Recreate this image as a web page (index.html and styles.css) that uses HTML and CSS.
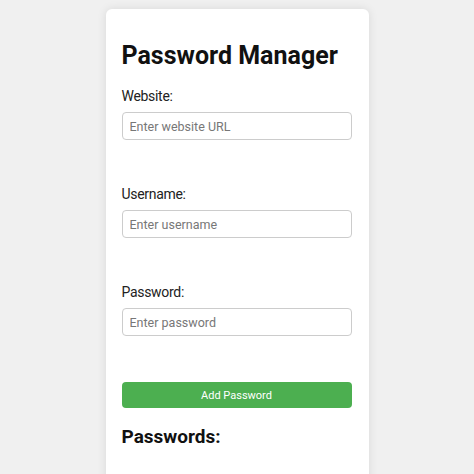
FILE: index.html
```html
<!DOCTYPE html>
<html>
<head>
<meta charset="utf-8">
<link rel="stylesheet" href="styles.css">
</head>
<body>
<div class="card">
  <h1 class="title">Password Manager</h1>
  <form class="form">
    <div class="group">
      <label class="label">Website:</label>
      <input class="input" type="text" placeholder="Enter website URL">
    </div>
    <div class="group">
      <label class="label">Username:</label>
      <input class="input" type="text" placeholder="Enter username">
    </div>
    <div class="group">
      <label class="label">Password:</label>
      <input class="input" type="password" placeholder="Enter password">
    </div>
    <button class="btn" type="button">Add Password</button>
  </form>
  <h2 class="subtitle">Passwords:</h2>
</div>
</body>
</html>
```
FILE: styles.css
```css
html, body {
  margin: 0;
  padding: 0;
  height: 100%;
  overflow: hidden;
}
body {
  background: #f0f0f0;
  font-family: Roboto, "Liberation Sans", Arial, sans-serif;
  color: #111;
  padding-top: 9px;
  box-sizing: border-box;
}
.card {
  width: 263px;
  margin: 0 auto;
  background: #fff;
  border-radius: 6px;
  box-shadow: 0 0 10px rgba(0,0,0,0.1);
  padding: 32px 16px 60px 16px;
  box-sizing: border-box;
}
.title {
  font-size: 25px;
  font-weight: 700;
  margin: 0 0 16px 0;
  line-height: 30px;
}
.form {
  display: flex;
  flex-direction: column;
}
.group {
  display: flex;
  flex-direction: column;
  margin-bottom: 45px;
}
.label {
  font-size: 14px;
  letter-spacing: -0.3px;
  line-height: 18px;
  color: #222;
  margin-bottom: 7px;
}
.input {
  height: 28px;
  box-sizing: border-box;
  border: 1px solid #ccc;
  border-radius: 4px;
  padding: 0 7px;
  font-family: Roboto, "Liberation Sans", Arial, sans-serif;
  font-size: 12.5px;
  width: 230px;
}
.input::placeholder {
  color: #777;
}
.btn {
  margin-top: 1px;
  height: 26px;
  width: 230px;
  border: none;
  border-radius: 4px;
  background: #4caf50;
  color: #fff;
  font-family: Roboto, "Liberation Sans", Arial, sans-serif;
  font-size: 11px;
}
.subtitle {
  font-size: 19px;
  font-weight: 700;
  line-height: 23px;
  margin: 17px 0 0 0;
}
```
